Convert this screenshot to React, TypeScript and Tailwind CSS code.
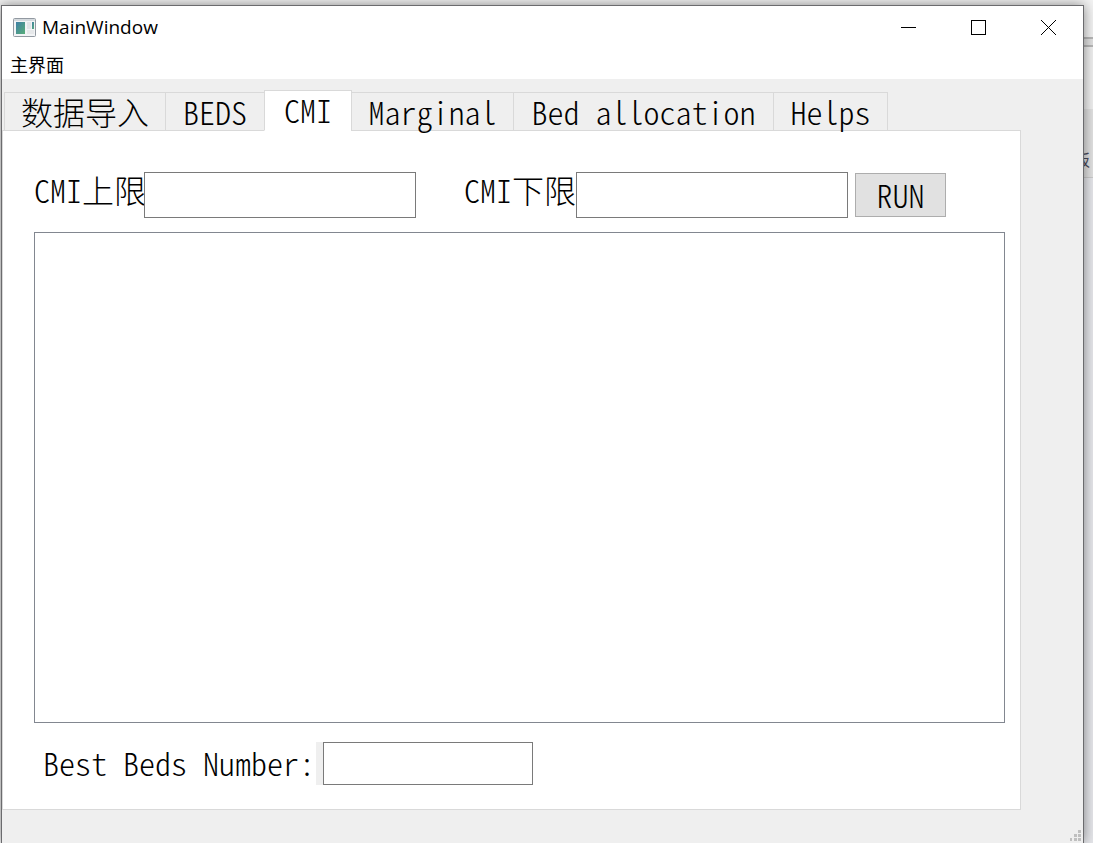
import { useState } from "react"

const tabs = [
  { name: "数据导入", width: "w-[162px]" },
  { name: "BEDS", width: "w-[100px]" },
  { name: "CMI", width: "w-[88px]" },
  { name: "Marginal", width: "w-[163px]" },
  { name: "Bed allocation", width: "w-[261px]" },
  { name: "Helps", width: "w-[115px]" },
]

const captionButton = "flex h-[43px] w-[70px] items-center justify-center hover:bg-gray-200"

function AppIcon() {
  return (
    <svg width="23" height="19" viewBox="0 0 23 19" aria-hidden="true">
      <defs>
        <linearGradient id="screen" x1="0" y1="0" x2="1" y2="1">
          <stop offset="0" stopColor="#3f7fa6" />
          <stop offset="1" stopColor="#58ae78" />
        </linearGradient>
      </defs>
      <rect x="0.5" y="0.5" width="22" height="18" rx="1" fill="#f2f4f6" stroke="#9299a1" />
      <rect x="1" y="1" width="21" height="2" fill="#d5dade" />
      <rect x="3" y="4" width="9" height="12" fill="url(#screen)" />
      <rect x="14" y="4" width="4" height="7" fill="#e2e5e8" />
      <rect x="19" y="4" width="2" height="7" fill="url(#screen)" />
      <rect x="14" y="12" width="7" height="4" fill="#e6e8ea" />
    </svg>
  )
}

function TitleBar() {
  return (
    <header className="flex h-[43px] items-center bg-white pl-[11px]">
      <AppIcon />
      <h1 className="ml-[6px] flex-1 pb-[2px] font-['Open_Sans','Noto_Sans',sans-serif] text-[19px] leading-6">MainWindow</h1>
      <button type="button" aria-label="Minimize" className={captionButton}>
        <svg width="15" height="15" viewBox="0 0 15 15" shapeRendering="crispEdges">
          <path d="M0 7.5h15" stroke="#000" />
        </svg>
      </button>
      <button type="button" aria-label="Maximize" className={captionButton}>
        <svg width="15" height="15" viewBox="0 0 15 15" shapeRendering="crispEdges">
          <rect x="0.5" y="0.5" width="14" height="14" fill="none" stroke="#000" />
        </svg>
      </button>
      <button type="button" aria-label="Close" className={captionButton}>
        <svg width="15" height="15" viewBox="0 0 15 15">
          <path d="M0 0l15 15M15 0L0 15" stroke="#000" />
        </svg>
      </button>
    </header>
  )
}

function SizeGrip() {
  return (
    <svg width="11" height="11" viewBox="0 0 11 11" fill="#bfbfbf" aria-hidden="true">
      <path d="M8 0h3v3H8zM4 4h3v3H4zM8 4h3v3H8zM0 8h2v3H0zM4 8h3v3H4zM8 8h3v3H8z" />
    </svg>
  )
}

// sliver of the application lying behind the window
function DesktopEdge() {
  return (
    <div className="flex w-[9px] flex-col overflow-hidden bg-[#e6e7eb]" aria-hidden="true">
      <div className="h-[34px] border-b-2 border-[#b8b8b8] bg-[#f3f3f3]"></div>
      <div className="h-2 border-b-2 border-[#b8b8b8] bg-[#e2e2e2]"></div>
      <div className="h-[62px] bg-[#f0f0f0]"></div>
      <div className="flex h-[69px] items-center justify-end border-b border-[#cccccc] bg-[#e2e2e2] pt-8 pr-[3px] font-['Noto_Sans_CJK_SC',sans-serif] text-base leading-6 text-[#4a4a5c]">
        板
      </div>
    </div>
  )
}

export default function App() {
  const [active, setActive] = useState("CMI")

  return (
    <div className="flex min-h-screen bg-[#f3f3f3] pt-[5px] pl-px text-black">
      <div className="relative z-10 flex min-w-0 flex-1 flex-col border border-b-0 border-[#6b6b6e] bg-[#efefef] shadow-[0_0_12px_rgba(0,0,0,0.45)]">
        <TitleBar />
        <nav className="flex h-[30px] items-center bg-white pl-2 font-['Noto_Sans_CJK_SC',sans-serif] text-lg leading-6">
          <button type="button">主界面</button>
        </nav>

        <main className="flex flex-1 flex-col pt-[11px] pr-[62px] font-['Noto_Sans_CJK_SC',sans-serif] text-[32px] leading-8 font-light [font-feature-settings:'hwid']">
          <div role="tablist" className="relative z-10 -mb-px flex h-[41px] items-end pl-[2px]">
            {tabs.map((tab) => (
              <button
                key={tab.name}
                type="button"
                role="tab"
                aria-selected={active === tab.name}
                onClick={() => setActive(tab.name)}
                className={`${tab.width} -mr-px flex shrink-0 items-center justify-center border border-[#d9d9d9] whitespace-nowrap ${
                  active === tab.name ? "h-[41px] border-b-white bg-white pb-1" : "h-[39px] bg-[#efefef] pb-[2px]"
                }`}
              >
                {tab.name}
              </button>
            ))}
          </div>

          <section role="tabpanel" className="flex flex-1 flex-col border border-[#d9d9d9] bg-white pt-[41px] pr-[15px] pb-6 pl-[31px]">
            <div className="flex items-center">
              <label htmlFor="cmi-upper" className="w-[110px] shrink-0 pb-3 whitespace-nowrap">
                CMI上限
              </label>
              <input id="cmi-upper" type="text" className="h-[46px] w-[272px] min-w-0 border border-[#7a7a7a] bg-white px-2" />
              <label htmlFor="cmi-lower" className="ml-12 w-28 shrink-0 pb-3 whitespace-nowrap">
                CMI下限
              </label>
              <input id="cmi-lower" type="text" className="h-[46px] w-[272px] min-w-0 border border-[#7a7a7a] bg-white px-2" />
              <button type="button" className="ml-[7px] flex h-11 w-[91px] items-center justify-center border border-[#adadad] bg-[#e1e1e1] pb-[2px]">
                RUN
              </button>
            </div>

            <div className="mt-[14px] min-h-40 flex-1 border border-[#828790] bg-white"></div>

            <div className="mt-[19px] flex items-center">
              <label htmlFor="best-beds" className="w-[282px] shrink-0 pb-1 pl-[9px] whitespace-nowrap">
                Best Beds Number:
              </label>
              <div className="bg-[#efefef] pl-[7px]">
                <input id="best-beds" type="text" className="block h-[43px] w-[210px] border border-[#7a7a7a] bg-white px-2" />
              </div>
            </div>
          </section>
        </main>

        <footer className="flex h-[33px] items-end justify-end pr-[2px] pb-[2px]">
          <SizeGrip />
        </footer>
      </div>
      <DesktopEdge />
    </div>
  )
}
